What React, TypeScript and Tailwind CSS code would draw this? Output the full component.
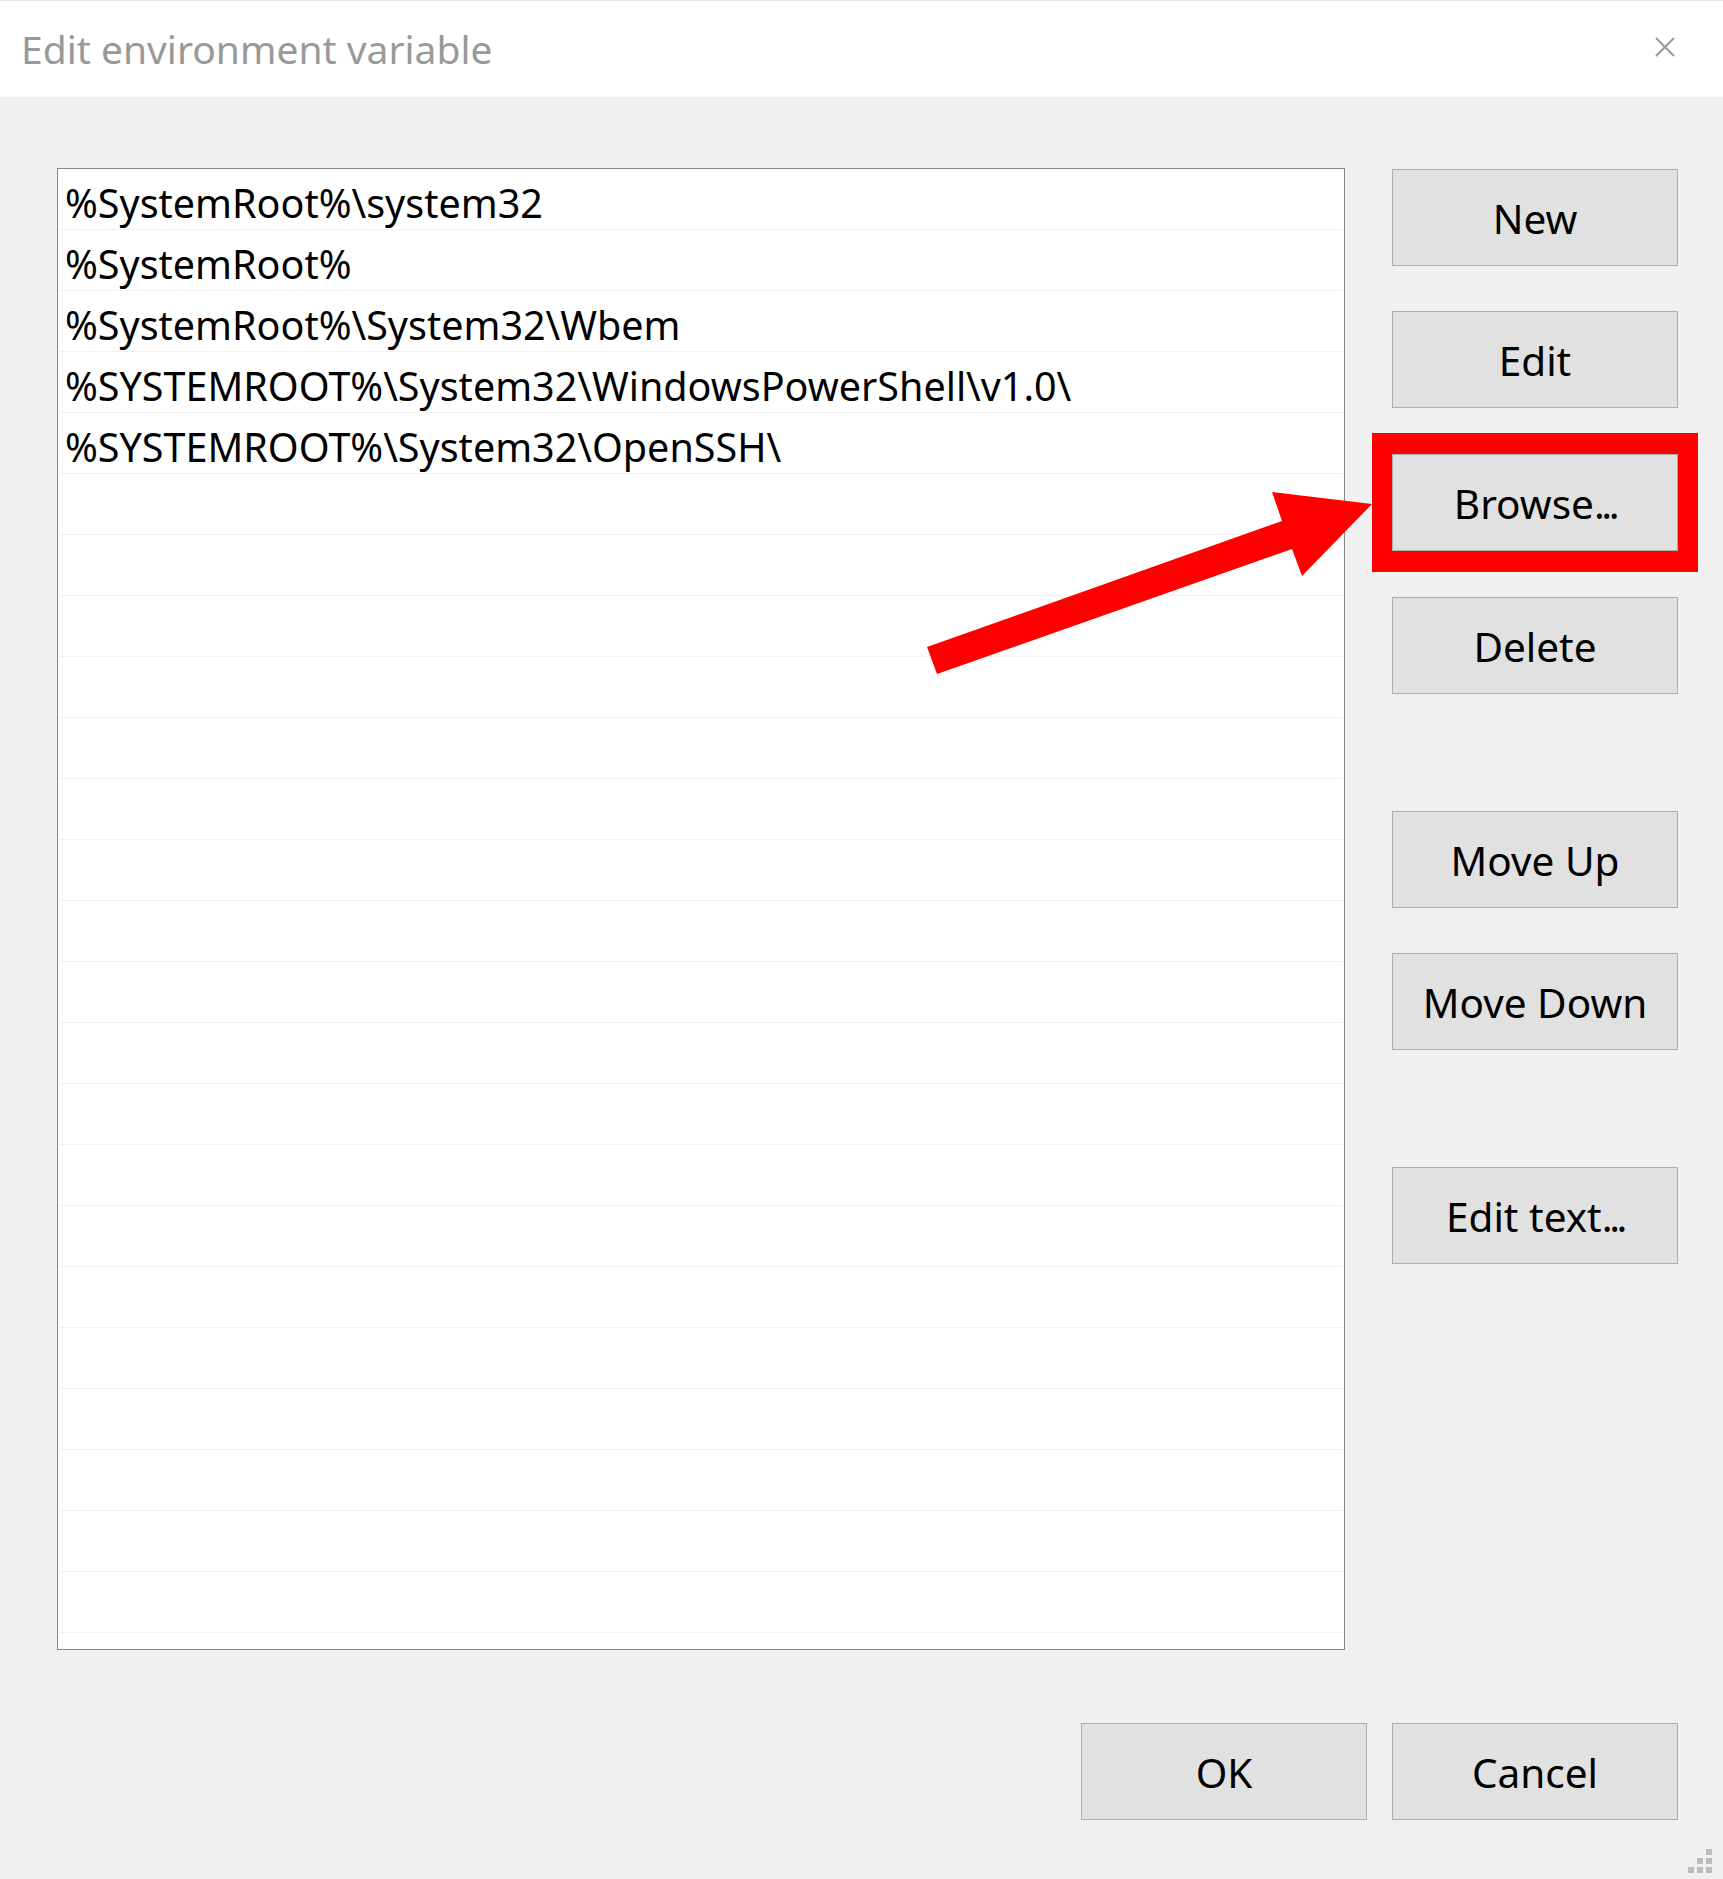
import type { ReactNode } from 'react';
import clsx from 'clsx';

const paths = [
  '%SystemRoot%\\system32',
  '%SystemRoot%',
  '%SystemRoot%\\System32\\Wbem',
  '%SYSTEMROOT%\\System32\\WindowsPowerShell\\v1.0\\',
  '%SYSTEMROOT%\\System32\\OpenSSH\\',
];

const rows = Array.from({ length: 24 }, (_, i) => paths[i] ?? '');

type DialogButtonProps = {
  children: ReactNode;
  className?: string;
};

function DialogButton({ children, className }: DialogButtonProps) {
  return (
    <button
      className={clsx(
        'flex h-[97px] w-[286px] items-center justify-center border border-[#adadad] bg-[#e1e1e1] pt-[4px] text-[40.5px] leading-none text-black',
        className
      )}
    >
      {children}
    </button>
  );
}

// Segoe's ellipsis dots sit tighter than three plain periods
function Dots() {
  return <span className="tracking-[-0.085em]">...</span>;
}

function ResizeGrip() {
  const cells = [false, false, true, false, true, true, true, true, true];
  return (
    <div className="absolute bottom-[6px] right-[11px] grid grid-cols-3 gap-[3px]">
      {cells.map((on, i) => (
        <span key={i} className={clsx('h-[6px] w-[6px]', on && 'bg-[#bcbcbc]')} />
      ))}
    </div>
  );
}

export default function App() {
  return (
    <div className="relative h-[1879px] w-[1723px] overflow-hidden border-t border-[#e6e6e6] bg-[#f0f0f0] font-['Noto_Sans',sans-serif]">
      <header className="flex h-[96px] items-center justify-between bg-white pl-[21px] pr-[48px]">
        <span className="text-[39px] text-[#999999]">Edit environment variable</span>
        <svg width="20" height="20" viewBox="0 0 20 20" className="mb-[4px] text-[#999999]">
          <path d="M1 1 L19 19 M19 1 L1 19" stroke="currentColor" strokeWidth="2" />
        </svg>
      </header>

      <div className="flex pl-[57px] pt-[71px]">
        <section className="h-[1482px] w-[1288px] overflow-hidden border border-[#828790] bg-white">
          {rows.map((path, i) => (
            <div
              key={i}
              className="mx-[1px] flex h-[61px] items-center border-b border-[#f0f0f0] pl-[6px] pt-[9px] text-[39.5px] leading-none text-black"
            >
              {path}
            </div>
          ))}
        </section>

        <div className="ml-[47px] flex w-[286px] flex-col pt-[1px]">
          <DialogButton>New</DialogButton>
          <DialogButton className="mt-[45px]">Edit</DialogButton>
          <div className="relative mt-[46px]">
            <DialogButton>
              Browse<Dots />
            </DialogButton>
            <span className="pointer-events-none absolute -inset-x-[20px] -inset-y-[21px] border-x-[20px] border-y-[21px] border-[#ff0000]" />
          </div>
          <DialogButton className="mt-[46px]">Delete</DialogButton>
          <DialogButton className="mt-[117px]">Move Up</DialogButton>
          <DialogButton className="mt-[45px]">Move Down</DialogButton>
          <DialogButton className="mt-[117px]">
            Edit text<Dots />
          </DialogButton>
        </div>
      </div>

      <footer className="flex justify-end gap-[25px] pr-[45px] pt-[73px]">
        <DialogButton>OK</DialogButton>
        <DialogButton>Cancel</DialogButton>
      </footer>

      <ResizeGrip />

      {/* annotation arrow pointing at Browse */}
      <svg
        className="pointer-events-none absolute left-0 top-0"
        width="1723"
        height="1879"
        viewBox="0 0 1723 1879"
      >
        <polygon
          points="927,646 1282,520 1272,491 1372,503 1302,575 1292,548 937,673"
          fill="#ff0000"
        />
      </svg>
    </div>
  );
}
